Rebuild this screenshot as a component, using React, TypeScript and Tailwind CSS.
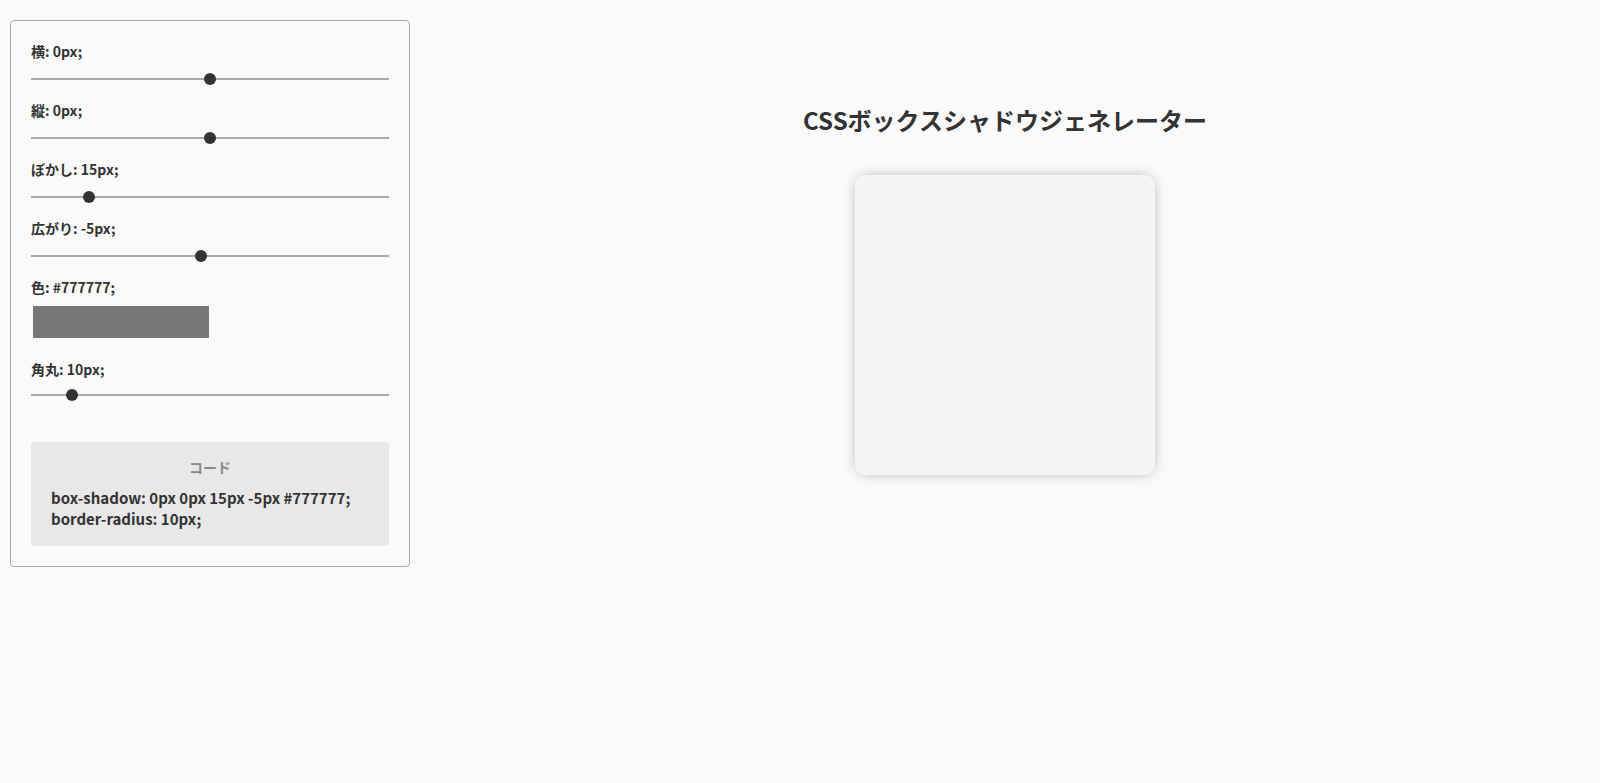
const sliders = [
  { label: "横", value: 0, min: -100, max: 100 },
  { label: "縦", value: 0, min: -100, max: 100 },
  { label: "ぼかし", value: 15, min: 0, max: 100 },
  { label: "広がり", value: -5, min: -100, max: 100 },
];

const radius = { label: "角丸", value: 10, min: 0, max: 100 };

function Slider({ value, min, max }: { value: number; min: number; max: number }) {
  const frac = (value - min) / (max - min);
  return (
    <div className="relative h-[12px] flex items-center">
      <div className="h-[2px] w-full bg-[#aaaaaa]" />
      {/* thumb */}
      <div
        className="absolute top-0 h-[12px] w-[12px] rounded-full bg-[#333333]"
        style={{ left: `calc(${frac} * (100% - 12px))` }}
      />
    </div>
  );
}

function SliderGroup({ label, value, min, max }: { label: string; value: number; min: number; max: number }) {
  return (
    <div className="mb-[15px]">
      <div className="text-[14px] leading-[20px] font-bold text-[#333333] mb-[12px]">
        {label}: {value}px;
      </div>
      <Slider value={value} min={min} max={max} />
    </div>
  );
}

export default function App() {
  return (
    <div
      className="min-h-screen bg-[#fafafa] flex items-start pl-[10px] pt-[20px]"
      style={{ fontFamily: '"Noto Sans CJK JP", "Noto Sans", sans-serif' }}
    >
      {/* Controls */}
      <div className="w-[400px] shrink-0 border border-[#aaaaaa] rounded-[4px] p-[20px]">
        {sliders.map((s) => (
          <SliderGroup key={s.label} {...s} />
        ))}

        <div className="mb-[21px]">
          <div className="text-[14px] leading-[20px] font-bold text-[#333333] mb-[9px]">
            色: #777777;
          </div>
          <div className="ml-[2px] h-[32px] w-[176px] bg-[#777777]" />
        </div>

        <div className="mb-[41px]">
          <div className="text-[14px] leading-[20px] font-bold text-[#333333] mb-[10px]">
            {radius.label}: {radius.value}px;
          </div>
          <Slider value={radius.value} min={radius.min} max={radius.max} />
        </div>

        {/* Code output */}
        <div className="bg-[#e8e8e8] rounded-[4px] px-[20px] pt-[15px] pb-[17px]">
          <div className="text-center text-[14px] leading-[20px] font-bold text-[#888888] mb-[10px]">
            コード
          </div>
          <div className="text-[15px] leading-[21px] font-bold text-[#333333]">
            <div>box-shadow: 0px 0px 15px -5px #777777;</div>
            <div>border-radius: 10px;</div>
          </div>
        </div>
      </div>

      {/* Preview */}
      <div className="flex-1 flex flex-col items-center pt-[83px]">
        <h1 className="text-[24px] font-bold text-[#333333] leading-[34px]">
          CSSボックスシャドウジェネレーター
        </h1>
        <div className="mt-[38px] h-[300px] w-[300px] bg-[#f5f5f5] rounded-[10px] shadow-[0_0_15px_-5px_#777777]" />
      </div>
    </div>
  );
}
